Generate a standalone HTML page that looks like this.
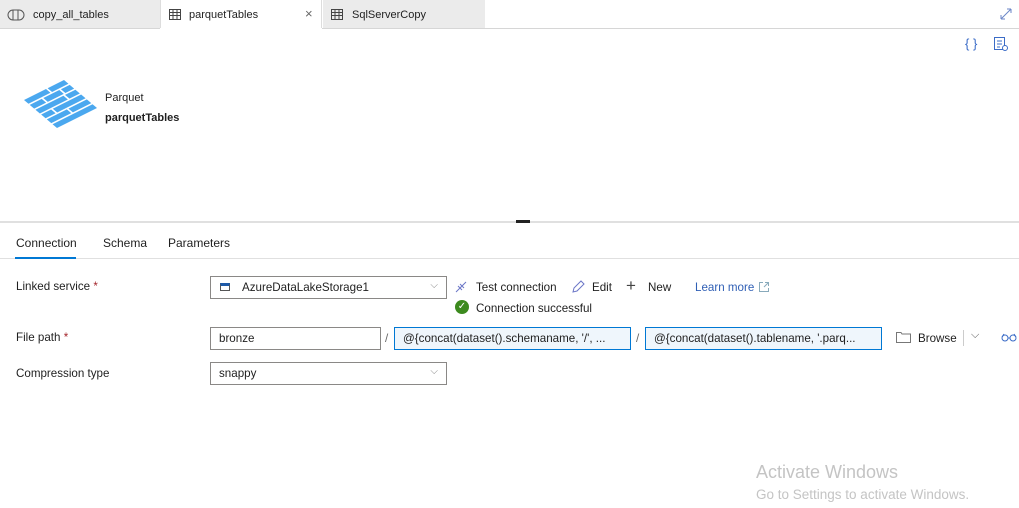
<!DOCTYPE html>
<html><head><style>
*{margin:0;padding:0;box-sizing:border-box}
body{width:1019px;height:508px;background:#fff;font-family:"Liberation Sans",sans-serif;font-size:11.6px;color:#1f1f1f;position:relative;overflow:hidden}
.a{position:absolute;white-space:nowrap}
.box{position:absolute;border:1px solid #8a8886;background:#fff;height:23px;padding:4px 8px;font-size:11.6px;white-space:nowrap;overflow:hidden}
.sel{border-color:#0078d4;background:#eff6fc}
.chev{position:absolute;right:8px;top:3px;color:#888;font-size:10px}
</style></head><body>
<div class="a" style="left:0;top:0;width:160px;height:28px;background:#ebebeb"></div>
<div class="a" style="left:160px;top:0;width:162px;height:29px;background:#fff;border-left:1px solid #ddd;border-right:1px solid #ddd"></div>
<div class="a" style="left:323px;top:0;width:162px;height:28px;background:#ebebeb"></div>
<div class="a" style="left:0;top:28px;width:1019px;height:1px;background:#d6d6d6"></div>
<div class="a" style="left:160px;top:28px;width:162px;height:1px;background:#fff"></div>
<svg class="a" style="left:7px;top:9px" width="18" height="12"><rect x="1" y="1" width="16" height="10" rx="5" fill="none" stroke="#555"/><line x1="6" y1="1" x2="6" y2="11" stroke="#555"/><line x1="11" y1="1" x2="11" y2="11" stroke="#555"/></svg>
<div class="a" style="left:33px;top:9px;font-size:11px">copy_all_tables</div>
<svg class="a" style="left:169px;top:9px" width="12" height="11"><rect x="0.5" y="0.5" width="11" height="10" fill="none" stroke="#444"/><path d="M0 3.5H12M0 6.5H12M4 0V11M8 0V11" stroke="#444"/></svg>
<div class="a" style="left:189px;top:9px;font-size:11px">parquetTables</div>
<div class="a" style="left:305px;top:6px;color:#666;font-size:13px">×</div>
<svg class="a" style="left:331px;top:9px" width="12" height="11"><rect x="0.5" y="0.5" width="11" height="10" fill="none" stroke="#444"/><path d="M0 3.5H12M0 6.5H12M4 0V11M8 0V11" stroke="#444"/></svg>
<div class="a" style="left:352px;top:9px;font-size:11px">SqlServerCopy</div>
<svg class="a" style="left:1000px;top:8px" width="12" height="12"><path d="M1 11L11 1M1 11V7M1 11H5M11 1H7M11 1V5" stroke="#6b86c7" fill="none"/></svg>
<div class="a" style="left:965px;top:36px;color:#3b6cc7;font-size:13px">{ }</div>
<svg class="a" style="left:994px;top:37px" width="14" height="14"><rect x="0.5" y="0.5" width="10" height="12" fill="none" stroke="#3b6cc7"/><path d="M3 4H8M3 7H8M3 10H6" stroke="#3b6cc7"/><circle cx="11" cy="11" r="2.5" fill="#fff" stroke="#3b6cc7"/></svg>
<svg class="a" style="left:0;top:0" width="110" height="140"><g fill="#4ba8ef" transform="matrix(40,-20,33,28,24,100)">
<rect x="0" y="0" width="0.55" height="0.135"/><rect x="0.59" y="0" width="0.41" height="0.135"/>
<rect x="0" y="0.173" width="0.3" height="0.135"/><rect x="0.34" y="0.173" width="0.4" height="0.135"/><rect x="0.78" y="0.173" width="0.22" height="0.135"/>
<rect x="0" y="0.346" width="0.7" height="0.135"/><rect x="0.74" y="0.346" width="0.26" height="0.135"/>
<rect x="0" y="0.519" width="0.25" height="0.135"/><rect x="0.29" y="0.519" width="0.71" height="0.135"/>
<rect x="0" y="0.692" width="0.5" height="0.135"/><rect x="0.54" y="0.692" width="0.46" height="0.135"/>
<rect x="0" y="0.865" width="1" height="0.135"/>
</g></svg>
<div class="a" style="left:105px;top:92px;font-size:11px">Parquet</div>
<div class="a" style="left:105px;top:112px;font-weight:bold;font-size:11px">parquetTables</div>
<div class="a" style="left:0;top:221px;width:1019px;height:2px;background:#e0e0e0"></div>
<div class="a" style="left:516px;top:220px;width:14px;height:3px;background:#222"></div>
<div class="a" style="left:16px;top:236px;font-size:12px">Connection</div>
<div class="a" style="left:103px;top:236px;font-size:12px">Schema</div>
<div class="a" style="left:168px;top:236px;font-size:12px">Parameters</div>
<div class="a" style="left:0;top:258px;width:1019px;height:1px;background:#e0e0e0"></div>
<div class="a" style="left:15px;top:257px;width:61px;height:2px;background:#0078d4"></div>
<div class="a" style="left:16px;top:280px">Linked service <span style="color:#a4262c">*</span></div>
<div class="a" style="left:16px;top:331px">File path <span style="color:#a4262c">*</span></div>
<div class="a" style="left:16px;top:367px">Compression type</div>
<div class="box" style="left:210px;top:276px;width:237px;padding-left:31px">AzureDataLakeStorage1<span class="chev">⌵</span></div>
<div class="a" style="left:220px;top:283px;width:10px;height:8px;border:1px solid #555;border-top:3px solid #1e5aa8;background:#fff"></div>
<svg class="a" style="left:454px;top:280px" width="14" height="14"><path d="M2 12L12 2M4 6L8 10M6 4L10 8" stroke="#6b76c7" fill="none"/></svg>
<div class="a" style="left:476px;top:281px">Test connection</div>
<svg class="a" style="left:571px;top:280px" width="14" height="14"><path d="M2 12L3 8L10 1L13 4L6 11Z" stroke="#6b76c7" fill="none"/></svg>
<div class="a" style="left:592px;top:281px">Edit</div>
<div class="a" style="left:626px;top:276px;font-size:17px;color:#444">+</div>
<div class="a" style="left:648px;top:281px">New</div>
<div class="a" style="left:695px;top:281px;color:#2f5fb5">Learn more</div>
<svg class="a" style="left:759px;top:282px" width="10" height="10"><path d="M4 0.5H0.5V9.5H9.5V6M6 0.5H9.5V4M9.5 0.5L5 5" stroke="#8ab" fill="none"/></svg>
<div class="a" style="left:455px;top:300px;width:14px;height:14px;border-radius:50%;background:#3c8a1e;color:#fff;font-size:10px;text-align:center;line-height:14px">✓</div>
<div class="a" style="left:476px;top:302px">Connection successful</div>
<div class="box" style="left:210px;top:327px;width:171px">bronze</div>
<div class="a" style="left:385px;top:332px;color:#666">/</div>
<div class="box sel" style="left:394px;top:327px;width:237px">@{concat(dataset().schemaname, '/', ...</div>
<div class="a" style="left:636px;top:332px;color:#666">/</div>
<div class="box sel" style="left:645px;top:327px;width:237px">@{concat(dataset().tablename, '.parq...</div>
<svg class="a" style="left:896px;top:332px" width="15" height="11"><path d="M0.5 0.5H5L6 2H14.5V10.5H0.5Z" fill="none" stroke="#777"/></svg>
<div class="a" style="left:918px;top:332px">Browse</div>
<div class="a" style="left:963px;top:330px;width:1px;height:16px;background:#ccc"></div>
<div class="a" style="left:971px;top:329px;color:#555;font-size:11px">⌵</div>
<svg class="a" style="left:1001px;top:333px" width="16" height="9"><circle cx="4" cy="5" r="3" fill="none" stroke="#3b6cc7"/><circle cx="12" cy="5" r="3" fill="none" stroke="#3b6cc7"/><path d="M7 5H9M1 4L3 1M15 4L13 1" stroke="#3b6cc7" fill="none"/></svg>
<div class="box" style="left:210px;top:362px;width:237px">snappy<span class="chev">⌵</span></div>
<div class="a" style="left:756px;top:462px;font-size:18px;color:#c4c4c4">Activate Windows</div>
<div class="a" style="left:756px;top:487px;font-size:13.5px;color:#c4c4c4">Go to Settings to activate Windows.</div>
</body></html>
